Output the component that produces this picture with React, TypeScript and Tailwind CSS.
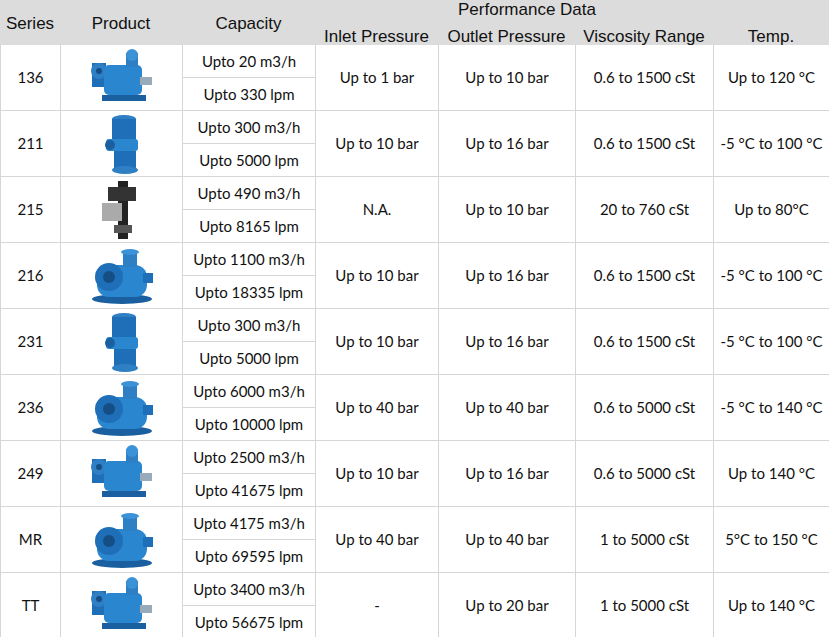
import React from "react";

type Row = { s: string; cap: [string, string]; inlet: string; outlet: string; visc: string; temp: string; kind: "h" | "v" | "b" | "big" };

const rows: Row[] = [
  { s: "136", cap: ["Upto 20 m3/h", "Upto 330 lpm"], inlet: "Up to 1 bar", outlet: "Up to 10 bar", visc: "0.6 to 1500 cSt", temp: "Up to 120 °C", kind: "h" },
  { s: "211", cap: ["Upto 300 m3/h", "Upto 5000 lpm"], inlet: "Up to 10 bar", outlet: "Up to 16 bar", visc: "0.6 to 1500 cSt", temp: "-5 °C to 100 °C", kind: "v" },
  { s: "215", cap: ["Upto 490 m3/h", "Upto 8165 lpm"], inlet: "N.A.", outlet: "Up to 10 bar", visc: "20 to 760 cSt", temp: "Up to 80°C", kind: "b" },
  { s: "216", cap: ["Upto 1100 m3/h", "Upto 18335 lpm"], inlet: "Up to 10 bar", outlet: "Up to 16 bar", visc: "0.6 to 1500 cSt", temp: "-5 °C to 100 °C", kind: "big" },
  { s: "231", cap: ["Upto 300 m3/h", "Upto 5000 lpm"], inlet: "Up to 10 bar", outlet: "Up to 16 bar", visc: "0.6 to 1500 cSt", temp: "-5 °C to 100 °C", kind: "v" },
  { s: "236", cap: ["Upto 6000 m3/h", "Upto 10000 lpm"], inlet: "Up to 40 bar", outlet: "Up to 40 bar", visc: "0.6 to 5000 cSt", temp: "-5 °C to 140 °C", kind: "big" },
  { s: "249", cap: ["Upto 2500 m3/h", "Upto 41675 lpm"], inlet: "Up to 10 bar", outlet: "Up to 16 bar", visc: "0.6 to 5000 cSt", temp: "Up to 140 °C", kind: "h" },
  { s: "MR", cap: ["Upto 4175 m3/h", "Upto 69595 lpm"], inlet: "Up to 40 bar", outlet: "Up to 40 bar", visc: "1 to 5000 cSt", temp: "5°C to 150 °C", kind: "big" },
  { s: "TT", cap: ["Upto 3400 m3/h", "Upto 56675 lpm"], inlet: "-", outlet: "Up to 20 bar", visc: "1 to 5000 cSt", temp: "Up to 140 °C", kind: "h" },
];

function Pump({ kind }: { kind: Row["kind"] }) {
  if (kind === "v")
    return (
      <svg width="40" height="62" viewBox="0 0 40 62">
        <ellipse cx="22" cy="6" rx="12" ry="4" fill="#2f7fc4" />
        <rect x="10" y="6" width="24" height="22" fill="#1f6fb8" />
        <rect x="4" y="26" width="32" height="12" rx="3" fill="#2a86cf" />
        <circle cx="8" cy="32" r="5" fill="#1a5f9f" />
        <rect x="12" y="38" width="22" height="18" fill="#1f6fb8" />
        <ellipse cx="23" cy="57" rx="13" ry="4" fill="#2f7fc4" />
      </svg>
    );
  if (kind === "b")
    return (
      <svg width="44" height="62" viewBox="0 0 44 62">
        <rect x="18" y="2" width="10" height="58" fill="#222" />
        <rect x="8" y="8" width="28" height="14" fill="#333" />
        <rect x="2" y="24" width="20" height="18" fill="#aaa" />
        <rect x="14" y="46" width="18" height="8" fill="#555" />
      </svg>
    );
  if (kind === "big")
    return (
      <svg width="70" height="58" viewBox="0 0 70 58">
        <ellipse cx="35" cy="52" rx="30" ry="5" fill="#1a5f9f" />
        <rect x="10" y="18" width="50" height="32" rx="12" fill="#2a86cf" />
        <circle cx="22" cy="30" r="14" fill="#1f6fb8" />
        <circle cx="22" cy="30" r="6" fill="#154e85" />
        <rect x="36" y="4" width="14" height="16" fill="#2f7fc4" />
        <ellipse cx="43" cy="5" rx="9" ry="3" fill="#3b92d6" />
        <rect x="56" y="26" width="10" height="10" fill="#1f6fb8" />
      </svg>
    );
  return (
    <svg width="72" height="58" viewBox="0 0 72 58">
      <rect x="6" y="14" width="14" height="24" fill="#1f6fb8" />
      <circle cx="13" cy="22" r="8" fill="#2f7fc4" />
      <circle cx="13" cy="22" r="3" fill="#154e85" />
      <rect x="18" y="16" width="38" height="30" rx="5" fill="#2a86cf" />
      <rect x="40" y="4" width="12" height="14" fill="#2f7fc4" />
      <circle cx="46" cy="6" r="6" fill="#3b92d6" />
      <rect x="54" y="28" width="12" height="8" fill="#9ab" />
      <rect x="16" y="46" width="44" height="6" fill="#1a5f9f" />
    </svg>
  );
}

const cell = "flex items-center justify-center border-r border-b border-[#d6d6d6]";

export default function App() {
  return (
    <div className="w-[829px] h-[637px] bg-white text-[15px] text-[#111] overflow-hidden" style={{ fontFamily: "Lato, 'Open Sans', sans-serif" }}>
      <div className="grid grid-cols-[60px_122px_133px_123px_137px_138px_116px] h-[45px] bg-[#dcdcdc] text-[17px]" style={{ fontFamily: "'Liberation Sans', Arial, sans-serif" }}>
        <div className="flex items-start justify-center pt-[11px]">Series</div>
        <div className="flex items-start justify-center pt-[11px]">Product</div>
        <div className="flex items-start justify-center pt-[11px]">Capacity</div>
        <div className="col-span-4 flex flex-col">
          <div className="h-[22px] flex items-end justify-center pr-[90px]">Performance Data</div>
          <div className="grid grid-cols-[123px_137px_138px_116px] pt-[2px]">
            <div className="text-center">Inlet Pressure</div>
            <div className="text-center">Outlet Pressure</div>
            <div className="text-center">Viscosity Range</div>
            <div className="text-center">Temp.</div>
          </div>
        </div>
      </div>
      {rows.map((r) => (
        <div key={r.s} className="grid grid-cols-[60px_122px_133px_123px_137px_138px_116px] h-[66px] border-l border-[#d6d6d6]">
          <div className={cell}>{r.s}</div>
          <div className={cell}><Pump kind={r.kind} /></div>
          <div className="flex flex-col border-r border-b border-[#d6d6d6]">
            <div className="flex-1 flex items-center justify-center border-b border-[#d6d6d6]">{r.cap[0]}</div>
            <div className="flex-1 flex items-center justify-center">{r.cap[1]}</div>
          </div>
          <div className={cell}>{r.inlet}</div>
          <div className={cell}>{r.outlet}</div>
          <div className={cell}>{r.visc}</div>
          <div className={cell}>{r.temp}</div>
        </div>
      ))}
    </div>
  );
}
